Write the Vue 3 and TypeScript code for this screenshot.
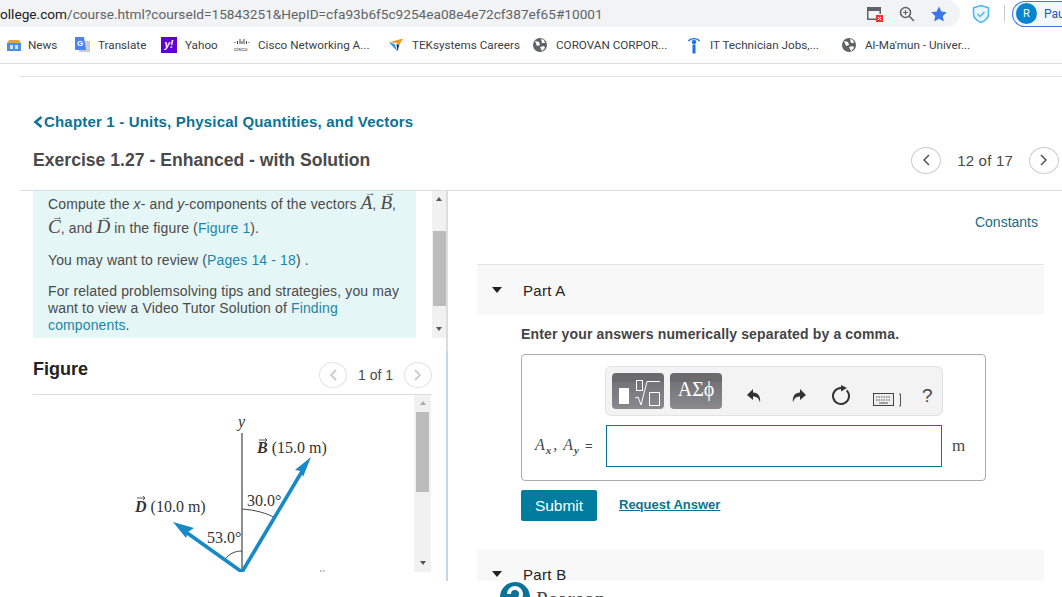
<script setup lang="ts">
const bookmarks = [
  { label: 'News', kind: 'news' },
  { label: 'Translate', kind: 'translate' },
  { label: 'Yahoo', kind: 'yahoo' },
  { label: 'Cisco Networking A...', kind: 'cisco' },
  { label: 'TEKsystems Careers', kind: 'tek' },
  { label: 'COROVAN CORPOR...', kind: 'globe' },
  { label: 'IT Technician Jobs,...', kind: 'it' },
  { label: "Al-Ma'mun - Univer...", kind: 'globe' },
]
</script>

<template>
  <div class="root">
    <header class="chrome">
      <div class="addr-row">
        <div class="url">
          <span class="url-text"><span class="host">ollege.com</span>/course.html?courseId=15843251&amp;HepID=cfa93b6f5c9254ea08e4e72cf387ef65#10001</span>
          <div class="url-icons">
            <svg width="18" height="18" viewBox="0 0 18 18"><path d="M1 2h14v4H1z" fill="#5f6368"/><path d="M1 6v9h9v-1.500H2.500V6zM13.500 6v3H15V6z" fill="#5f6368"/><rect x="10" y="10" width="7" height="7" fill="#e53935"/><path d="M12 12l3 3M15 12l-3 3" stroke="#fff" stroke-width="1"/></svg>
            <svg width="18" height="18" viewBox="0 0 18 18" fill="none" stroke="#5f6368" stroke-width="1.6"><circle cx="7.5" cy="7.5" r="5"/><path d="M11.3 11.3L16 16"/><path d="M5 7.5h5M7.500 5v5" stroke-width="1.2"/></svg>
            <svg width="18" height="18" viewBox="0 0 18 18"><path d="M9 1.500l2.400 5 5.400.7-4 3.800 1 5.400L9 13.800 4.200 16.400l1-5.400-4-3.800 5.400-.7z" fill="#3b78e7"/></svg>
          </div>
        </div>
        <svg class="shield" width="18" height="20" viewBox="0 0 18 20"><path d="M9 1.500l7.500 2.300v6c0 4-3 7-7.500 8.700-4.500-1.700-7.500-4.700-7.500-8.700v-6z" fill="#eaf6fd" stroke="#4cb8f0" stroke-width="1.600"/><path d="M5.500 10l2.500 2.500 4.500-4.500" fill="none" stroke="#4cb8f0" stroke-width="1.500"/></svg>
        <span class="vsep"></span>
        <div class="profile"><span class="avatar">R</span><span class="pname">Pau</span></div>
      </div>
      <nav class="bookmarks">
        <div v-for="b in bookmarks" :key="b.label" class="bm">
          <svg v-if="b.kind === 'news'" width="16" height="16" viewBox="0 0 16 16"><path d="M3 3h10l2 3H1z" fill="#e8a33d"/><rect x="1" y="6" width="14" height="8" fill="#4a8fe7"/><rect x="4" y="8" width="3" height="4" fill="#cfe2fb"/><rect x="9" y="8" width="3" height="4" fill="#cfe2fb"/></svg>
          <svg v-else-if="b.kind === 'translate'" width="16" height="18" viewBox="0 0 16 18"><rect x="5" y="5" width="11" height="11" fill="#c9ccd1"/><path d="M1 1h9l2 13H1z" fill="#4a85ec"/><text x="3" y="10" font-size="8" font-weight="700" fill="#fff" font-family="Liberation Sans, sans-serif">G</text></svg>
          <span v-else-if="b.kind === 'yahoo'" class="yahoo">y!</span>
          <svg v-else-if="b.kind === 'cisco'" width="16" height="14" viewBox="0 0 16 14"><path d="M1 4v1M3.500 3v3M6 1v5M8 3v3M10 1v5M12.500 3v3M15 4v1" stroke="#444" stroke-width="1"/><text x="0" y="13" font-size="6" fill="#444" font-family="Liberation Sans, sans-serif">cisco</text></svg>
          <svg v-else-if="b.kind === 'tek'" width="17" height="16" viewBox="0 0 17 16"><path d="M1 5L16 1l-4 7-3-2z" fill="#f39a1f"/><path d="M1 5l6 2 3 8z" fill="#25a0dc"/><path d="M9 7l3 1-2 7z" fill="#13365c"/></svg>
          <svg v-else-if="b.kind === 'globe'" width="16" height="16" viewBox="0 0 16 16"><circle cx="8" cy="8" r="7" fill="#5f6368"/><path d="M3 4l4 1 1 3-3 1zM9 2l3 1 1 3-3 0zM8 10l4-1 1 2-3 3z" fill="#fff"/></svg>
          <svg v-else width="14" height="18" viewBox="0 0 14 18" fill="none" stroke="#1a73e8"><path d="M1.500 5a6 4 0 0 1 11 0" stroke-width="1.400"/><circle cx="7" cy="6" r="1.800" fill="#1a73e8"/><rect x="5.500" y="8.500" width="3" height="9" fill="#1a73e8" stroke="none"/></svg>
          <span>{{ b.label }}</span>
        </div>
      </nav>
    </header>

    <main class="page">
      <div class="rule"></div>
      <div class="crumb"><svg width="11" height="12" viewBox="0 0 11 12" fill="none" stroke="#0a7396" stroke-width="2.600"><path d="M8.500 1L2.500 6l6 5"/></svg><a>Chapter 1 - Units, Physical Quantities, and Vectors</a></div>
      <div class="title-row">
        <h1>Exercise 1.27 - Enhanced - with Solution</h1>
        <div class="pager">
          <span class="circ"><svg width="10" height="14" viewBox="0 0 10 14" fill="none" stroke="#555" stroke-width="1.500"><path d="M8 2L3 7l5 5"/></svg></span>
          <span class="count">12 of 17</span>
          <span class="circ"><svg width="10" height="14" viewBox="0 0 10 14" fill="none" stroke="#555" stroke-width="1.500"><path d="M2 2l5 5-5 5"/></svg></span>
        </div>
      </div>

      <div class="split">
        <section class="left">
          <div class="intro-wrap">
            <div class="intro">
              <p class="p1">Compute the <i>x</i>- and <i>y</i>-components of the vectors <span class="vec">A</span>, <span class="vec">B</span>,<br><span class="vec">C</span>, and <span class="vec">D</span> in the figure (<a>Figure 1</a>).</p>
              <p class="p2">You may want to review (<a>Pages 14 - 18</a>) .</p>
              <p class="p3">For related problemsolving tips and strategies, you may want to view a Video Tutor Solution of <a>Finding components</a>.</p>
            </div>
            <div class="sbar"><span class="up"></span><span class="thumb t1"></span><span class="down"></span></div>
          </div>
          <div class="fig-head">
            <h2>Figure</h2>
            <div class="fig-pager">
              <span class="circ sm"><svg width="10" height="14" viewBox="0 0 10 14" fill="none" stroke="#ccc" stroke-width="1.800"><path d="M8 2L3 7l5 5"/></svg></span>
              <span>1 of 1</span>
              <span class="circ sm"><svg width="10" height="14" viewBox="0 0 10 14" fill="none" stroke="#ccc" stroke-width="1.800"><path d="M2 2l5 5-5 5"/></svg></span>
            </div>
          </div>
          <div class="fig-body">
            <svg class="diagram" width="381" height="186" viewBox="33 395 381 186">
              <defs><clipPath id="figclip"><rect x="33" y="395" width="381" height="177"/></clipPath></defs>
              <g clip-path="url(#figclip)">
                <path d="M242 433V572" stroke="#444" stroke-width="1.200"/>
                <path d="M242 509C255 510 267 513 275 518" fill="none" stroke="#444" stroke-width="1"/>
                <path d="M225 559C230 553 236 551 242 551" fill="none" stroke="#444" stroke-width="1"/>
                <path d="M242 572L304 468" stroke="#1689c6" stroke-width="3.600"/>
                <path d="M311 457L295 470 301 471 303 477z" fill="#1689c6"/>
                <path d="M242 572L183 530" stroke="#1689c6" stroke-width="3.600"/>
                <path d="M173 522L194 528 188 532 186 538z" fill="#1689c6"/>
                <path d="M320 571h1.500M323 571h1.500" stroke="#666"/>
              </g>
              <g class="fig-text">
                <text x="238" y="427" font-style="italic">y</text>
                <text x="257" y="453"><tspan font-weight="700" font-style="italic">B</tspan> (15.0 m)</text>
                <text x="135" y="512"><tspan font-weight="700" font-style="italic">D</tspan> (10.0 m)</text>
                <text x="247" y="506">30.0°</text>
                <text x="207" y="543">53.0°</text>
              </g>
              <path d="M259 440h8M265 438l2 2-2 2M137 498h8M143 496l2 2-2 2" stroke="#333" fill="none" stroke-width=".8"/>
            </svg>
            <div class="sbar fig-sbar"><span class="up light"></span><span class="thumb t2"></span><span class="down"></span></div>
          </div>
        </section>

        <section class="right">
          <a class="constants">Constants</a>
          <div class="part part-a"><span class="caret"></span><span>Part A</span></div>
          <div class="answer">
            <p class="prompt">Enter your answers numerically separated by a comma.</p>
            <div class="box">
              <div class="toolbar">
                <span class="tb-btn tb-math"><span class="sq"></span><svg width="28" height="30" viewBox="0 0 28 30" fill="none" stroke="#fff" stroke-width="1"><rect x="2.500" y="3.500" width="6" height="10"/><path d="M1 21l3-1 3 8 6-23.500h13"/><rect x="15.500" y="15.500" width="10" height="13"/></svg></span>
                <span class="tb-btn tb-greek">ΑΣϕ</span>
                <svg class="ic i1" width="18" height="18" viewBox="0 0 18 18"><path d="M7 2L1 8l6 5V9.500c4 0 6 2 7 6 1-6-2-10-7-10z" fill="#333"/></svg>
                <svg class="ic i2" width="18" height="18" viewBox="0 0 18 18"><path d="M11 2l6 6-6 5V9.500c-4 0-6 2-7 6-1-6 2-10 7-10z" fill="#333"/></svg>
                <svg class="ic i3" width="22" height="22" viewBox="0 0 22 22" fill="none" stroke="#333" stroke-width="2"><path d="M16.660 5.340A8 8 0 1 1 11 3"/><path d="M11 0l6 3-6 3.500z" fill="#333" stroke="none"/></svg>
                <svg class="ic i4" width="24" height="14" viewBox="0 0 24 14"><rect x=".5" y=".5" width="20" height="12" fill="#eee" stroke="#444"/><path d="M3 4h15M3 7h15" stroke="#555" stroke-dasharray="1.500 1"/><path d="M6 10h9" stroke="#555"/><path d="M26 1h1.500v12H26" fill="none" stroke="#555"/></svg>
                <span class="help">?</span>
              </div>
              <div class="entry">
                <span class="lhs"><i>A<sub>x</sub></i><span class="comma">,</span> <i>A<sub>y</sub></i> <span class="eq">=</span></span>
                <div class="field"></div>
                <span class="unit">m</span>
              </div>
            </div>
            <div class="actions">
              <button class="submit" type="button">Submit</button>
              <a class="req">Request Answer</a>
            </div>
          </div>
          <div class="part part-b"><span class="caret"></span><span>Part B</span></div>
        </section>
      </div>
    </main>
    <div class="pearson">
      <svg width="30" height="30" viewBox="0 0 30 30"><circle cx="15" cy="15" r="15" fill="#0a7396"/><path d="M9 12a6 6 0 1 1 7 6v8" fill="none" stroke="#fff" stroke-width="4"/></svg>
      <span>Pearson</span>
    </div>
  </div>
</template>

<style>
html, body { margin: 0; background: #fff; overflow: hidden; }
</style>

<style scoped>
.root { width: 1062px; height: 597px; overflow: hidden; position: relative; font-family: "Liberation Sans", Arial, sans-serif; color: #4a4a4a; background: #fff; }
a { color: #1a87a8; }
p { margin: 0; }

.chrome { height: 64px; border-bottom: 1px solid #dadce0; box-sizing: border-box; font-family: Roboto, "Open Sans", sans-serif; }
.addr-row { height: 27px; display: flex; align-items: center; }
.url { width: 960px; height: 27px; background: #f1f3f4; border-radius: 0 14px 14px 0; display: flex; align-items: center; justify-content: space-between; overflow: hidden; padding-right: 12px; box-sizing: border-box; flex: none; }
.url-text { font-size: 13.65px; color: #5f6368; white-space: nowrap; }
.host { color: #202124; }
.url-icons { display: flex; gap: 14px; align-items: center; }
.shield { margin-left: 12px; flex: none; }
.vsep { width: 1px; height: 17px; background: #c8cacc; margin: 0 7px 0 14px; flex: none; }
.profile { flex: 1; height: 26px; border: 1px solid #3b78e7; border-right: 0; border-radius: 13px 0 0 13px; background: #f4f8fe; display: flex; align-items: center; box-sizing: border-box; padding-left: 3px; gap: 7px; }
.avatar { width: 21px; height: 21px; border-radius: 50%; background: #0a84d0; color: #fff; font-size: 11px; display: flex; align-items: center; justify-content: center; flex: none; }
.pname { font-size: 12px; color: #1a56c4; }
.bookmarks { height: 36px; padding-left: 6px; display: grid; grid-template-columns: 68px 87px 73px 154px 144px 154px 155px 1fr; align-items: center; font-size: 11.7px; color: #3c4043; }
.bm { display: flex; align-items: center; gap: 8px; white-space: nowrap; min-width: 0; }
.bm:first-child { gap: 6px; }
.bm > svg { width: 16px; flex: none; }
.yahoo { width: 16px; height: 16px; background: #5f01d1; color: #fff; font: italic 700 10px/16px "Liberation Sans", sans-serif; text-align: center; flex: none; }

.page { height: 517px; overflow: hidden; box-sizing: border-box; padding-top: 12px; }
.rule { height: 1px; background: #e2e2e2; margin-left: 19px; margin-bottom: 33px; }
.crumb { padding-left: 33px; display: flex; align-items: center; height: 23px; }
.crumb a { font-size: 15px; font-weight: 700; color: #0a7396; letter-spacing: .18px; }
.title-row { display: flex; justify-content: space-between; align-items: center; padding: 0 3px 0 33px; height: 32px; margin-top: 11px; }
h1 { font-size: 17.6px; font-weight: 700; color: #4a4a4a; margin: 0; }
.pager { display: flex; align-items: center; gap: 16px; font-size: 15px; }
.count { letter-spacing: .2px; }
.circ { width: 30px; height: 27px; border: 1px solid #ccc; border-radius: 50%; display: flex; align-items: center; justify-content: center; box-sizing: border-box; }
.circ.sm { width: 28px; height: 26px; border-color: #e2e2e2; }

.split { display: flex; margin: 14px 0 0 20px; border-top: 1px solid #dcdcdc; height: 391px; }
.left { width: 426px; height: 391px; border-right: 2px solid; border-image: linear-gradient(#dddddd 0 160px, #c5d5e8 160px) 1; flex: none; }
.intro-wrap { height: 147px; margin-left: 13px; display: flex; gap: 16px; overflow: hidden; }
.intro { width: 383px; background: #e5f6f7; box-sizing: border-box; padding: 0 14px 0 15px; font-size: 14px; line-height: 17px; height: 147px; flex: none; letter-spacing: .13px; }
.intro a { color: #1a87a8; }
.p1 { line-height: 24px; padding-top: 1px; }
.p2 { margin-top: 12px; }
.p3 { margin-top: 14px; }
.vec { position: relative; font: italic 19px "Liberation Serif", serif; letter-spacing: 0; }
.vec::before { content: "→"; position: absolute; top: -6px; left: 4px; font: 11px "Liberation Sans", sans-serif; }
.sbar { width: 14px; background: #f1f1f1; display: flex; flex-direction: column; align-items: center; flex: none; height: 147px; }
.up { width: 0; height: 0; border: 3.500px solid transparent; border-top: 0; border-bottom: 4px solid #555; margin: 6px 0 0; }
.up.light { border-bottom-color: #aaa; }
.down { width: 0; height: 0; border: 3.500px solid transparent; border-bottom: 0; border-top: 4px solid #555; margin-bottom: 7px; }
.thumb { width: 13px; background: #bcbcbc; }
.t1 { height: 75px; margin: 30px 0 auto; }
.t2 { height: 80px; margin: 7px 0 auto; }

.fig-head { margin-left: 13px; width: 399px; height: 57px; display: flex; justify-content: space-between; align-items: center; border-bottom: 1px solid #dcdcdc; box-sizing: border-box; padding-top: 6px; }
h2 { font-size: 18px; font-weight: 700; color: #222; margin: 0; }
.fig-pager { display: flex; gap: 11px; align-items: center; font-size: 14px; margin-top: 11px; }
.fig-body { margin-left: 13px; display: flex; height: 186px; }
.diagram { display: block; flex: none; }
.fig-text { font: 16px "Liberation Serif", serif; fill: #333; }
.fig-sbar { height: 177px; width: 17px; }

.right { flex: 1; padding-left: 29px; padding-right: 18px; min-width: 0; }
.constants { display: block; text-align: right; color: #1a6c85; font-size: 14px; margin: 23px 6px 0 0; line-height: 17px; }
.part { background: #f8f8f8; display: flex; gap: 21px; font-size: 15px; letter-spacing: .3px; color: #222; padding-left: 15px; box-sizing: border-box; }
.part-a { height: 51px; margin-top: 33px; border-top: 1px solid #e4e4e4; align-items: center; }
.part-b { height: 31px; margin-top: 29px; padding-top: 16px; align-items: flex-start; }
.part-b .caret { margin-top: 5px; }
.caret { width: 0; height: 0; border: 5.500px solid transparent; border-bottom: 0; border-top: 6px solid #222; }
.answer { padding-left: 44px; }
.prompt { font-size: 14px; font-weight: 700; color: #444; margin-top: 11px; line-height: 17px; letter-spacing: .15px; }
.box { margin-top: 11px; width: 465px; height: 127px; border: 1px solid #aaa; border-radius: 4px; box-sizing: border-box; padding-top: 11px; }
.toolbar { margin-left: 83px; width: 338px; height: 50px; background: #f3f3f3; border: 1px solid #e2e2e2; border-radius: 6px; box-sizing: border-box; display: flex; align-items: center; padding-left: 6px; }
.tb-btn { height: 36px; width: 52px; border-radius: 4px; background: linear-gradient(#6b6b6e 0 9px, #747478 9px, #8a8a8e); color: #fff; display: flex; align-items: center; box-sizing: border-box; flex: none; }
.tb-math { gap: 5px; margin-right: 6px; padding-left: 7px; }
.sq { width: 10px; height: 16px; background: #fff; margin-top: 9px; flex: none; }
.tb-math svg { flex: none; margin-top: 1px; }
.tb-greek { font: 20px "Liberation Serif", serif; justify-content: center; padding-bottom: 3px; }
.ic { flex: none; margin-top: 10px; }
.i1 { margin-left: 24px; }
.i2 { margin-left: 25px; }
.i3 { margin-left: 23px; }
.i4 { margin-left: 21px; margin-top: 17px; overflow: visible; }
.help { font-size: 19px; color: #444; margin-left: 25px; margin-top: 10px; }
.entry { display: flex; align-items: center; margin-top: 9px; }
.lhs { width: 84px; padding-left: 13px; box-sizing: border-box; font: 16px "Liberation Serif", serif; white-space: nowrap; }
.lhs i { letter-spacing: 1px; }
.lhs sub { font-size: 11px; font-weight: 700; }
.comma { margin: 0 2px 0 1px; }
.eq { font: 13px "Liberation Sans", sans-serif; margin-left: 1px; }
.field { width: 336px; height: 42px; border: 1px solid #0a7396; box-sizing: border-box; flex: none; }
.unit { font: 17px "Liberation Serif", serif; margin-left: 10px; }
.actions { display: flex; align-items: center; gap: 22px; margin-top: 9px; }
.submit { width: 76px; height: 31px; background: #007c9e; border: 0; border-radius: 2px; color: #fff; font: 15.5px "Liberation Sans", sans-serif; padding: 0; }
.req { font-size: 13px; font-weight: 700; color: #0a7396; text-decoration: underline; margin-bottom: 2px; }

.pearson { position: absolute; left: 500px; top: 582px; height: 15px; width: 130px; display: flex; gap: 6px; overflow: hidden; background: #fff; font: 21px "Liberation Serif", serif; color: #444; align-items: flex-start; }
.pearson svg { flex: none; }
.pearson span { margin-top: 5px; letter-spacing: .5px; }
</style>
